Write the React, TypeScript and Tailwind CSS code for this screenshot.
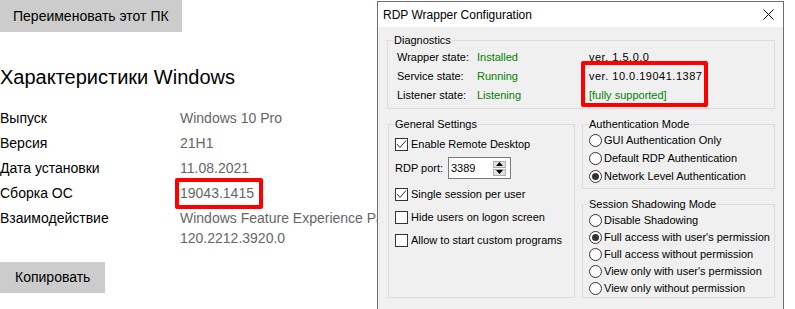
import React from "react";

const CheckBox = ({ checked, label, className = "" }: { checked?: boolean; label: string; className?: string }) => (
  <div className={`flex h-[17px] items-center gap-[3px] ${className}`}>
    <span className="flex h-[13px] w-[13px] shrink-0 items-center justify-center border border-[#333333] bg-white">
      {checked && (
        <svg width="11" height="11" viewBox="0 0 11 11">
          <polyline points="1,5 4,8.5 10,1.5" fill="none" stroke="#333333" strokeWidth="1" />
        </svg>
      )}
    </span>
    <span>{label}</span>
  </div>
);

const Radio = ({ checked, label, className = "" }: { checked?: boolean; label: string; className?: string }) => (
  <div className={`flex items-center gap-[2px] ${className}`}>
    <span className="flex h-[13px] w-[13px] shrink-0 items-center justify-center rounded-full border border-[#333333] bg-white">
      {checked && <span className="h-[7px] w-[7px] rounded-full bg-[#333333]" />}
    </span>
    <span>{label}</span>
  </div>
);

const Info = ({ label, children }: { label: string; children: React.ReactNode }) => (
  <div className="grid grid-cols-[180px_1fr] leading-[20px]">
    <span>{label}</span>
    <div className="text-[#666666]">{children}</div>
  </div>
);

const App = () => {
  return (
    <div className="flex h-[309px] w-[795px] overflow-hidden bg-white">
      <div className="w-[377px] shrink-0 overflow-hidden whitespace-nowrap font-['Liberation_Sans',Arial,sans-serif] text-[14px] text-black">
        <button className="block h-[32px] bg-[#cccccc] px-[13px]">Переименовать этот ПК</button>
        <h2 className="mt-[31px] text-[20px] leading-[28px]">Характеристики Windows</h2>
        <div className="mt-[17px] flex flex-col gap-[5px]">
          <Info label="Выпуск">Windows 10 Pro</Info>
          <Info label="Версия">21H1</Info>
          <Info label="Дата установки">11.08.2021</Info>
          <Info label="Сборка ОС">
            <span className="relative">
              19043.1415
              <span className="absolute -left-[5px] -top-[7px] h-[31px] w-[88px] rounded-[2px] border-4 border-[#ff0000]" />
            </span>
          </Info>
          <Info label="Взаимодействие">
            <div>Windows Feature Experience Pack</div>
            <div>120.2212.3920.0</div>
          </Info>
        </div>
        <button className="mt-[14px] block h-[31px] bg-[#cccccc] px-[15px]">Копировать</button>
      </div>

      <div className="mt-[1px] h-[320px] w-[407px] shrink-0 border border-[#6e6e6e] bg-[#f0f0f0] font-['Liberation_Sans',Arial,sans-serif] text-[11px] text-black">
        <div className="flex h-[25px] items-center justify-between bg-white pl-[5px] pr-[9px] text-[12px]">
          <span>RDP Wrapper Configuration</span>
          <svg width="11" height="11" viewBox="0 0 11 11">
            <path d="M0.5 0.5 L10.5 10.5 M10.5 0.5 L0.5 10.5" stroke="#000" strokeWidth="1" />
          </svg>
        </div>

        <fieldset className="mx-[8px] ml-[9px] mt-[6px] border border-[#dcdcdc]">
          <legend className="ml-[5px] px-[1px] leading-[14px]">Diagnostics</legend>
          <div className="relative grid grid-cols-[80px_112px_1fr] auto-rows-[19px] items-center pb-[3px] pl-[9px] pt-[1px]">
            <span>Wrapper state:</span>
            <span className="text-[#008000]">Installed</span>
            <span className="tracking-[0.5px]">ver.  1.5.0.0</span>
            <span>Service state:</span>
            <span className="text-[#008000]">Running</span>
            <span className="tracking-[0.5px]">ver.  10.0.19041.1387</span>
            <span>Listener state:</span>
            <span className="text-[#008000]">Listening</span>
            <span className="text-[#008000]">[fully supported]</span>
            <span className="absolute left-[193px] top-[14px] h-[46px] w-[127px] rounded-[2px] border-4 border-[#ff0000]" />
          </div>
        </fieldset>

        <div className="mt-[8px] grid grid-cols-[187px_193px] gap-[7px] pl-[10px]">
          <fieldset className="h-[181px] border border-[#dcdcdc] pl-[6px]">
            <legend className="ml-[-1px] px-[1px] leading-[14px]">General Settings</legend>
            <CheckBox checked label="Enable Remote Desktop" className="mt-[5px]" />
            <div className="mt-[4px] flex h-[22px] items-center">
              <span className="w-[53px]">RDP port:</span>
              <div className="flex h-[22px] w-[63px] items-center justify-between border border-[#7a7a7a] bg-white pl-[2px] pr-[4px]">
                <span>3389</span>
                <div className="flex flex-col gap-[1px]">
                  <span className="flex h-[7px] w-[13px] items-center justify-center border border-[#adadad] bg-[#e1e1e1]">
                    <svg width="7" height="4" viewBox="0 0 7 4"><path d="M3.5 0 L7 4 L0 4 Z" fill="#000" /></svg>
                  </span>
                  <span className="flex h-[7px] w-[13px] items-center justify-center border border-[#adadad] bg-[#e1e1e1]">
                    <svg width="7" height="4" viewBox="0 0 7 4"><path d="M0 0 L7 0 L3.5 4 Z" fill="#000" /></svg>
                  </span>
                </div>
              </div>
            </div>
            <CheckBox checked label="Single session per user" className="mt-[7px]" />
            <CheckBox label="Hide users on logon screen" className="mt-[6px]" />
            <CheckBox label="Allow to start custom programs" className="mt-[6px]" />
          </fieldset>

          <div className="flex flex-col">
            <fieldset className="border border-[#dcdcdc] pb-[3px] pl-[6px]">
              <legend className="ml-[-1px] px-[1px] leading-[14px]">Authentication Mode</legend>
              <Radio label="GUI Authentication Only" className="h-[18px]" />
              <Radio label="Default RDP Authentication" className="h-[18px]" />
              <Radio checked label="Network Level Authentication" className="h-[18px]" />
            </fieldset>
            <fieldset className="mt-[8px] flex-1 border border-[#dcdcdc] pl-[6px] pt-[1px]">
              <legend className="ml-[-1px] px-[1px] leading-[14px]">Session Shadowing Mode</legend>
              <Radio label="Disable Shadowing" className="h-[17px]" />
              <Radio checked label="Full access with user's permission" className="h-[17px]" />
              <Radio label="Full access without permission" className="h-[17px]" />
              <Radio label="View only with user's permission" className="h-[17px]" />
              <Radio label="View only without permission" className="h-[17px]" />
            </fieldset>
          </div>
        </div>
      </div>
    </div>
  );
};

export default App;
